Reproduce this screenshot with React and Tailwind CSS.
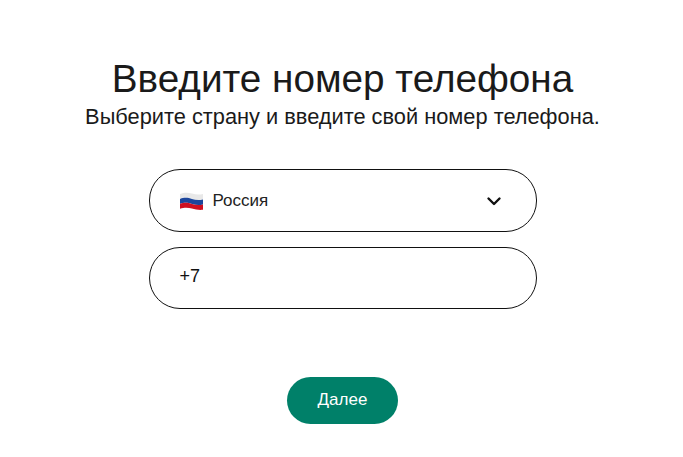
import React from 'react';

const font = { sans: 'font-["Liberation_Sans",Arial,sans-serif]' };

function RuFlag() {
  return (
    <svg width="23" height="18" viewBox="0 0 24 18" preserveAspectRatio="none" className="shrink-0 ml-[1px]">
      <path d="M0 2C5 0 9 .6 12.5 1.6s7.5 1.4 11.5.4V7.4C20 8.4 16 8 12.5 7S5 5 0 7Z" fill="#e8e8e8" />
      <path d="M0 7C5 5 9 6 12.5 7s7.5 1.4 11.5.4v5C20 13.4 16 13 12.5 12S5 10 0 12Z" fill="#1c469c" />
      <path d="M0 12C5 10 9 11 12.5 12s7.5 1.4 11.5.4v5.400C20 18.200 16 17.600 12.5 16.600S5 15 0 16.800Z" fill="#cf1020" />
    </svg>
  );
}

export default function App() {
  return (
    <div className={`${font.sans} w-[683px] h-[457px] bg-white flex flex-col items-center overflow-hidden pl-[2px] text-[#1a1a1a]`}>
      <h1 className="mt-[57px] text-[38.7px] leading-[44px] font-normal whitespace-nowrap">Введите номер телефона</h1>
      <p className="text-[21.8px] leading-[32px] whitespace-nowrap">Выберите страну и введите свой номер телефона.</p>

      <div className="mt-[36px] flex flex-col gap-[15px] w-[388px]">
        <div className="h-[63px] rounded-[31px] border border-[#111] flex items-center justify-between pl-[29px] pr-[34px]">
          <div className="flex items-center gap-[10px]">
            <RuFlag />
            <span className="text-[17px] text-[#222]">Россия</span>
          </div>
          <svg width="16" height="16" viewBox="0 0 16 16" fill="none" stroke="#111" strokeWidth="2.4" strokeLinecap="round" strokeLinejoin="round">
            <path d="M2.5 5.5 8 11l5.5-5.5" />
          </svg>
        </div>
        <div className="h-[62px] rounded-[31px] border border-[#111] flex items-center pl-[30px] pb-[3px] text-[18px] text-[#111]">
          +7
        </div>
      </div>

      <button className="mt-[68px] w-[111px] h-[47px] pb-[2px] rounded-full bg-[#008069] text-white text-[17px]">Далее</button>
    </div>
  );
}
